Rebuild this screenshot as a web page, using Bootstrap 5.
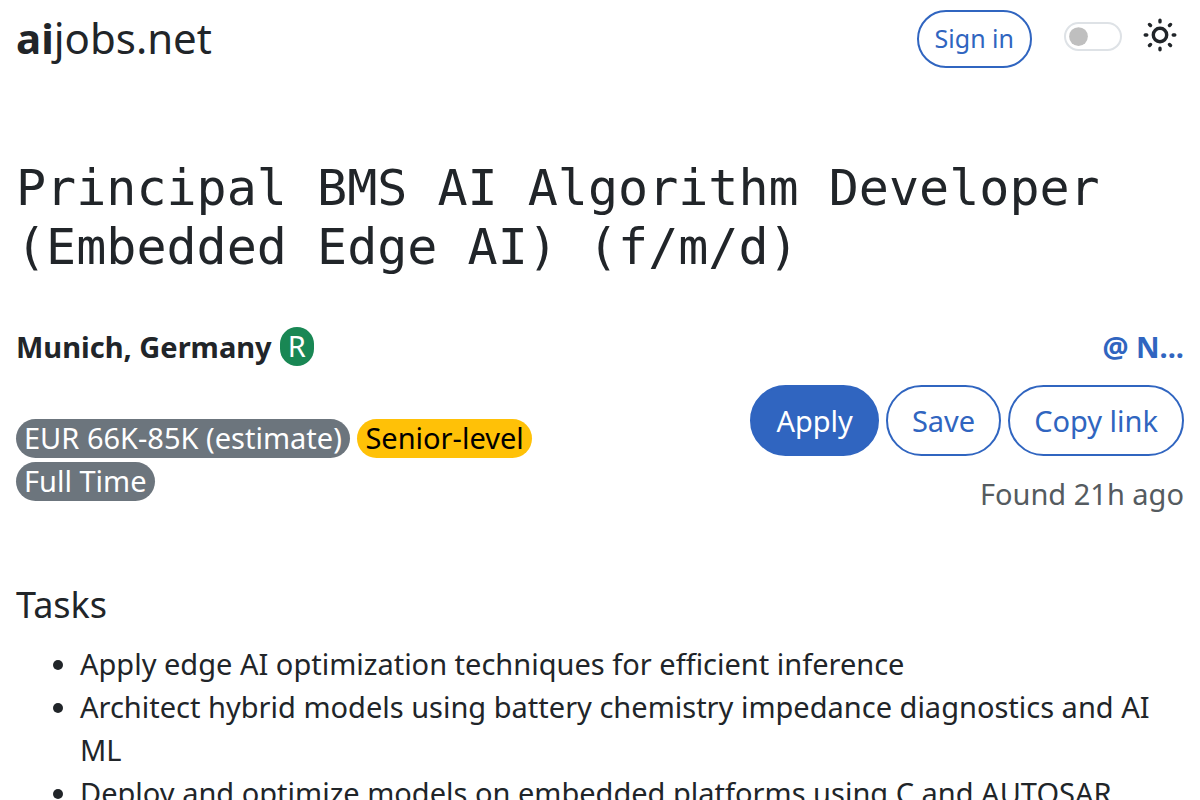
<!DOCTYPE html>
<html lang="en">
<head>
<meta charset="utf-8">
<meta name="viewport" content="width=device-width, initial-scale=1">
<title>Principal BMS AI Algorithm Developer | aijobs.net</title>
<link href="https://cdn.jsdelivr.net/npm/bootstrap@5.3.0/dist/css/bootstrap.min.css" rel="stylesheet">
<style>
:root { --brand: #3065c0; }
body { font-family: "Noto Sans", sans-serif; font-size: 29px; line-height: 43px; color: #212529; }
.page { padding: 0 16px; }
.topbar { padding-top: 10px; }
.site-logo { font-size: 42px; line-height: 56px; color: #212529; }
.btn-pill { --bs-btn-color: var(--brand); --bs-btn-border-color: var(--brand); --bs-btn-hover-bg: var(--brand); --bs-btn-hover-color: #fff; --bs-btn-border-width: 2px; --bs-btn-border-radius: 50rem; --bs-btn-font-size: 29px; --bs-btn-line-height: 43px; --bs-btn-padding-y: 12px; --bs-btn-padding-x: 24px; }
.btn-fill { --bs-btn-bg: var(--brand); --bs-btn-color: #fff; }
.btn-signin { --bs-btn-font-size: 25px; --bs-btn-line-height: 36px; --bs-btn-padding-y: 8px; --bs-btn-padding-x: 16px; padding-bottom: 10px; margin-right: 32px; }
.theme-switch.form-check-input { width: 58px; height: 29px; margin: 12px 20px 0 0; border: 2px solid #dee2e6; border-radius: 29px; }
.theme-icon { width: 36px; height: 36px; margin: 7px 6px 0 0; }
.job-title { font-family: "DejaVu Sans Mono", monospace; font-size: 50px; line-height: 59px; margin: 91px 0 48px; }
.tag { display: inline-block; line-height: 37px; padding: 0 8px 2px; border-radius: 20px; vertical-align: top; }
.tags { padding-top: 51px; }
.actions { gap: 7px; padding-top: 17px; }
.found { margin-top: 16px; color: #555b60; }
.company { color: var(--brand); }
.section-title { font-size: 36px; line-height: 43px; margin: 68px 0 16px; }
.tasks { padding-left: 64px; }
</style>
</head>
<body>
<div class="page">
<header class="topbar d-flex align-items-start">
<a class="site-logo text-decoration-none me-auto" href="#"><b>ai</b>jobs.net</a>
<button class="btn btn-pill btn-signin" type="button">Sign in</button>
<div class="form-switch p-0 d-flex"><input class="form-check-input theme-switch" type="checkbox" role="switch" id="theme" aria-label="Dark mode">
<label for="theme" aria-label="Theme" class="d-flex"><svg class="theme-icon" viewBox="0 0 36 36" fill="none" stroke="#212529" stroke-width="3.400" stroke-linecap="round"><circle cx="18" cy="18" r="6.700"/><path d="M18 3.200v1.600M18 31.200v1.600M3.200 18h1.600M31.200 18h1.600M7.500 7.500l1 1M27.500 27.500l1 1M7.500 28.500l1-1M27.500 8.500l1-1"/></svg></label></div>
</header>
<main>
<h1 class="job-title fw-normal">Principal BMS AI Algorithm Developer (Embedded Edge AI) (f/m/d)</h1>
<div class="d-flex justify-content-between">
<div class="fw-bold d-flex align-items-center gap-2">Munich, Germany <span class="tag text-bg-success fw-normal">R</span></div>
<a class="company fw-bold text-decoration-none" href="#">@ N...</a>
</div>
<div class="row gx-0">
<div class="col-6 tags"><span class="tag text-bg-secondary">EUR 66K-85K (estimate)</span> <span class="tag text-bg-warning">Senior-level</span> <span class="tag text-bg-secondary">Full Time</span></div>
<div class="col-6">
<div class="actions d-flex justify-content-end">
<button class="btn btn-pill btn-fill" type="button">Apply</button>
<button class="btn btn-pill" type="button">Save</button>
<button class="btn btn-pill" type="button">Copy link</button>
</div>
<div class="found text-end">Found 21h ago</div>
</div>
</div>
<section>
<h2 class="section-title fw-normal">Tasks</h2>
<ul class="tasks">
<li>Apply edge AI optimization techniques for efficient inference</li>
<li>Architect hybrid models using battery chemistry impedance diagnostics and AI ML</li>
<li>Deploy and optimize models on embedded platforms using C and AUTOSAR</li>
</ul>
</section>
</main>
</div>
<script src="https://cdn.jsdelivr.net/npm/bootstrap@5.3.0/dist/js/bootstrap.bundle.min.js"></script>
</body>
</html>
